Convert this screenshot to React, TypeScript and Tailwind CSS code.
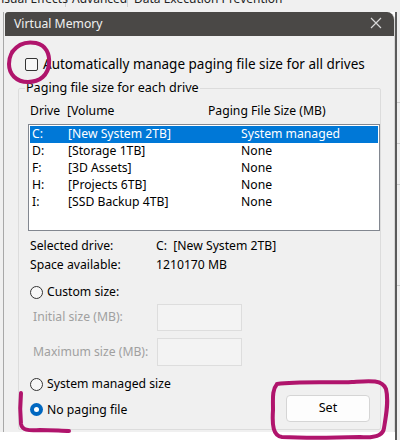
const rows = [
  { drive: "C:", volume: "[New System 2TB]", size: "System managed", selected: true },
  { drive: "D:", volume: "[Storage 1TB]", size: "None" },
  { drive: "F:", volume: "[3D Assets]", size: "None" },
  { drive: "H:", volume: "[Projects 6TB]", size: "None" },
  { drive: "I:", volume: "[SSD Backup 4TB]", size: "None" },
];

function Radio({ checked }: { checked?: boolean }) {
  if (checked) {
    return (
      <span className="w-[13px] h-[13px] rounded-full bg-[#0067c0] flex items-center justify-center shrink-0">
        <span className="w-[5px] h-[5px] rounded-full bg-white" />
      </span>
    );
  }
  return <span className="w-[13px] h-[13px] rounded-full border border-[#333] bg-[#f7f7f7] shrink-0" />;
}

export default function App() {
  return (
    <div className="relative w-[400px] h-[440px] overflow-hidden bg-white font-['Noto_Sans',sans-serif] text-[12.2px] text-black">
      {/* parent window tabs peeking out above */}
      <div className="h-[12px] bg-[#f0f0f0] overflow-hidden leading-[16px] text-[#222] text-[12px]">
        <div className="-mt-[9px] flex whitespace-nowrap">
          <span className="ml-[-6px] w-[72px] pr-[3px] border-r border-[#cfcfcf]">Visual Effects</span>
          <span className="ml-[6px] w-[56px] border-r border-[#cfcfcf]">Advanced</span>
          <span className="ml-[6px]">Data Execution Prevention</span>
        </div>
      </div>

      <div className="flex h-[428px]">
        <div className="w-[5px] bg-[#f0f0f0] h-[420px] flex justify-end">
          <div className="w-[1px] mr-[1px] bg-[#a8a8a8]" />
        </div>

        {/* dialog */}
        <div className="w-[390px] h-[420px] flex flex-col bg-[#f0f0f0] rounded-tr-[8px] rounded-tl-[3px] overflow-hidden border-r border-[#d8d8d8]">
          <div className="h-[24px] shrink-0 bg-[#4a4846] flex items-center justify-between pl-[9px] pr-[12px] text-[#f0f0f0] text-[12.2px]">
            <span>Virtual Memory</span>
            <svg width="12" height="12" viewBox="0 0 12 12" className="mt-[-2px]">
              <path d="M1 1 L11 11 M11 1 L1 11" stroke="#d8d8d8" strokeWidth="1.2" />
            </svg>
          </div>

          <div className="flex-1 flex flex-col px-[13px]">
            <label className="h-[16px] mt-[20px] pl-[7px] flex items-center gap-[5px] whitespace-nowrap text-[13.5px]">
              <span className="w-[13px] h-[13px] rounded-[2px] border border-[#333] bg-[#f7f7f7] shrink-0" />
              <span>Automatically manage paging file size for all drives</span>
            </label>

            <fieldset className="mt-[8px] border border-[#dcdcdc] rounded-[2px] pl-[9px] h-[350px] flex flex-col">
              <legend className="ml-[-3px] px-[1px] leading-[16px] text-[12.6px]">Paging file size for each drive</legend>

              <div className="h-[20px] mt-[5px] flex items-center whitespace-nowrap">
                <span className="pl-[2px] w-[39px]">Drive</span>
                <span className="w-[141px]">[Volume</span>
                <span>Paging File Size (MB)</span>
              </div>

              <div className="mt-[3px] h-[107px] border border-[#828790] bg-white pt-[1px] px-[1px]">
                {rows.map((r) => (
                  <div
                    key={r.drive}
                    className={`h-[17px] flex items-center whitespace-nowrap ${r.selected ? "bg-[#0078d7] text-white" : ""}`}
                  >
                    <span className="pl-[2px] w-[38px]">{r.drive}</span>
                    <span className="w-[173px]">{r.volume}</span>
                    <span>{r.size}</span>
                  </div>
                ))}
              </div>

              <div className="mt-[5px] h-[20px] flex items-center whitespace-nowrap">
                <span className="pl-[2px] w-[128px]">Selected drive:</span>
                <span>C:&nbsp;&nbsp;[New System 2TB]</span>
              </div>
              <div className="h-[19px] flex items-center whitespace-nowrap">
                <span className="pl-[2px] w-[128px]">Space available:</span>
                <span>1210170 MB</span>
              </div>

              <label className="mt-[7px] h-[20px] flex items-center gap-[4px] pl-[2px]">
                <Radio />
                <span>Custom size:</span>
              </label>

              <div className="mt-[1px] h-[28px] flex items-center text-[#a0a0a0]">
                <span className="pl-[5px] w-[129px]">Initial size (MB):</span>
                <div className="w-[85px] h-[27px] border border-[#dddddd] bg-[#f3f3f3]" />
              </div>
              <div className="mt-[7px] h-[28px] flex items-center text-[#a0a0a0]">
                <span className="pl-[5px] w-[129px]">Maximum size (MB):</span>
                <div className="w-[85px] h-[28px] border border-[#dddddd] bg-[#f3f3f3]" />
              </div>

              <label className="mt-[8px] h-[20px] flex items-center gap-[4px] pl-[2px]">
                <Radio />
                <span>System managed size</span>
              </label>

              <div className="mt-[6px] h-[20px] flex items-center justify-between pr-[10px]">
                <label className="flex items-center gap-[4px] pl-[2px]">
                  <Radio checked />
                  <span>No paging file</span>
                </label>
                <button className="w-[84px] h-[27px] -mt-[3px] bg-[#fdfdfd] border border-[#d5d5d5] rounded-[4px] text-[12.6px]">
                  Set
                </button>
              </div>
            </fieldset>
          </div>
        </div>

        <div className="w-[5px] h-[428px] bg-[#f0f0f0] border-l-[2px] border-[#5b5b5b] flex flex-col">
          <div className="mt-[90px] h-[1px] bg-[#cccccc]" />
          <div className="mt-[40px] h-[1px] bg-[#cccccc]" />
          <div className="mt-[40px] h-[1px] bg-[#cccccc]" />
          <div className="mt-[100px] h-[1px] bg-[#cccccc]" />
        </div>
      </div>

      {/* hand-drawn highlights */}
      <svg className="absolute inset-0 pointer-events-none" width="400" height="440" viewBox="0 0 400 440">
        <g fill="none" stroke="#b0146c" strokeWidth="4" strokeLinecap="round" strokeLinejoin="round">
          <path d="M12 52 C18 44 26 41 36 43 C46 45 50 54 49 64 C48 75 40 82 28 82 C16 82 9 74 9 64 C9 56 13 50 17 47" />
          <path d="M21 393 C20 403 20 414 21 424 C22 430 28 431 40 430 C52 430 62 431 69 431" />
          <path d="M277 384 C300 381 330 383 352 382 C368 381 382 379 386 389 C389 401 386 416 384 428 C383 437 372 438 360 437 C330 438 300 438 282 437 C273 436 272 425 273 410 C273 398 272 390 277 384" />
        </g>
      </svg>
    </div>
  );
}
